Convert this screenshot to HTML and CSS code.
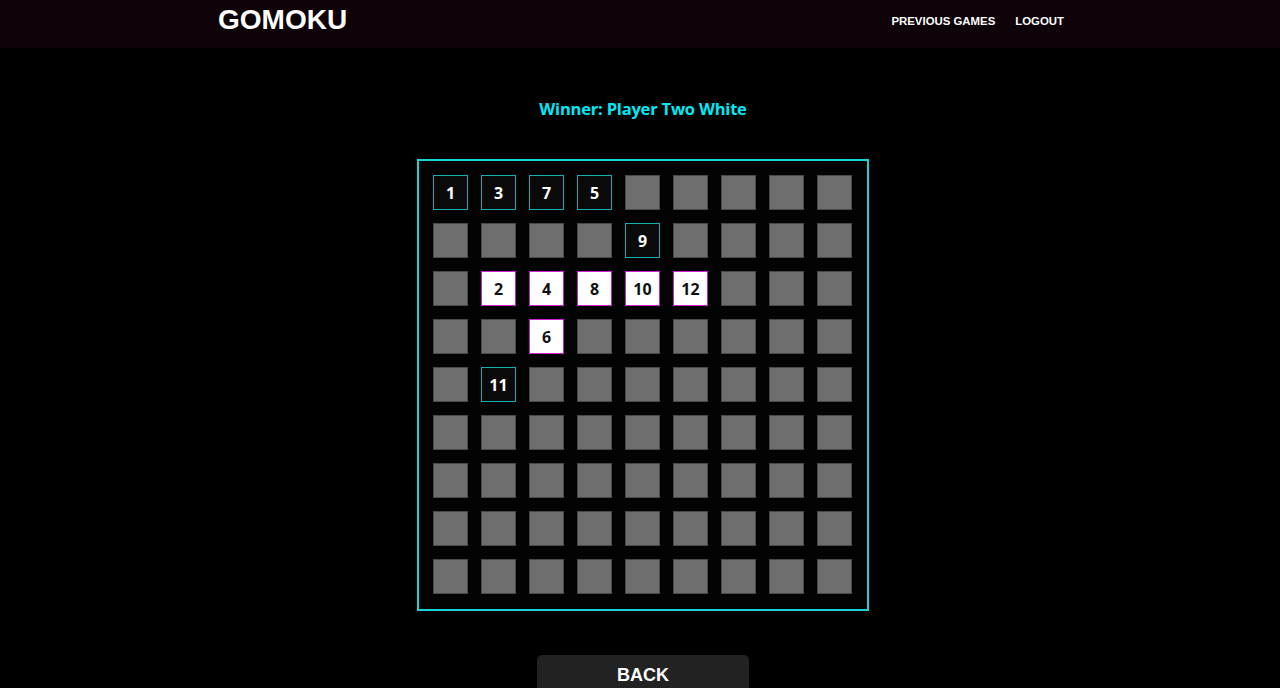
FILE: index.html
```html
<!DOCTYPE html>
<html lang="en">
<head>
<meta charset="utf-8">
<title>Gomoku</title>
<link rel="stylesheet" href="styles.css">
</head>
<body>
<header class="topbar">
  <div class="topbar-inner">
    <div class="logo">GOMOKU</div>
    <nav class="nav">
      <a class="nav-link" href="#">PREVIOUS GAMES</a>
      <a class="nav-link" href="#">LOGOUT</a>
    </nav>
  </div>
</header>
<main class="main">
  <h2 class="winner">Winner: Player Two White</h2>
  <div class="board" id="board"></div>
  <button class="back">BACK</button>
</main>
<script src="script.js"></script>
</body>
</html>
```
FILE: styles.css
```css
html, body {
  margin: 0;
  padding: 0;
  background: #000;
  color: #fff;
  height: 688px;
  overflow: hidden;
}
.topbar {
  background: #0d0308;
  height: 48px;
}
.topbar-inner {
  width: 846px;
  margin: 0 auto;
  padding-left: 2px;
  height: 48px;
  display: flex;
  align-items: center;
  justify-content: space-between;
  font-family: "Liberation Sans", Arial, sans-serif;
}
.logo {
  font-size: 28px;
  font-weight: bold;
  color: #fff;
  margin-top: -8px;
}
.nav {
  display: flex;
  gap: 20px;
  margin-top: -7px;
}
.nav-link {
  color: #fff;
  text-decoration: none;
  font-size: 11.4px;
  font-weight: bold;
}
.main {
  display: flex;
  flex-direction: column;
  align-items: center;
  padding-left: 6px;
}
.winner {
  margin: 49px 0 0;
  font-family: "Open Sans", sans-serif;
  font-weight: bold;
  font-size: 16.5px;
  color: #00eaf6;
  line-height: 24px;
  letter-spacing: -0.2px;
}
.board {
  margin-top: 38px;
  border: 2px solid #1ad3d3;
  padding: 14px 15px 15px 14px;
  display: grid;
  grid-template-columns: repeat(9, 35px);
  grid-auto-rows: 35px;
  gap: 13px;
  background: #030303;
}
.cell {
  box-sizing: border-box;
  border: 1px solid #4a4a4a;
  background: #6e6e6e;
  display: flex;
  align-items: center;
  justify-content: center;
  font-family: "Open Sans", sans-serif;
  font-weight: bold;
  font-size: 16px;
}
.cell-black {
  background: #0a0a0a;
  border-color: #12b0b0;
  color: #fff;
}
.cell-white {
  background: #fff;
  border-color: #d21fd6;
  color: #111;
}
.back {
  margin-top: 44px;
  width: 212px;
  height: 44px;
  background: #222;
  border: none;
  border-radius: 5px;
  color: #fff;
  font-family: "Liberation Sans", Arial, sans-serif;
  font-weight: bold;
  font-size: 18px;
  padding: 0 0 4px;
}
```
FILE: script.js
```js
var moves = {
  "0,0": 1, "0,1": 3, "0,2": 7, "0,3": 5,
  "1,4": 9,
  "2,1": 2, "2,2": 4, "2,3": 8, "2,4": 10, "2,5": 12,
  "3,2": 6,
  "4,1": 11
};
var board = document.getElementById("board");
for (var r = 0; r < 9; r++) {
  for (var c = 0; c < 9; c++) {
    var d = document.createElement("div");
    var m = moves[r + "," + c];
    if (m) {
      d.className = "cell " + (m % 2 ? "cell-black" : "cell-white");
      d.textContent = m;
    } else {
      d.className = "cell";
    }
    board.appendChild(d);
  }
}
```
